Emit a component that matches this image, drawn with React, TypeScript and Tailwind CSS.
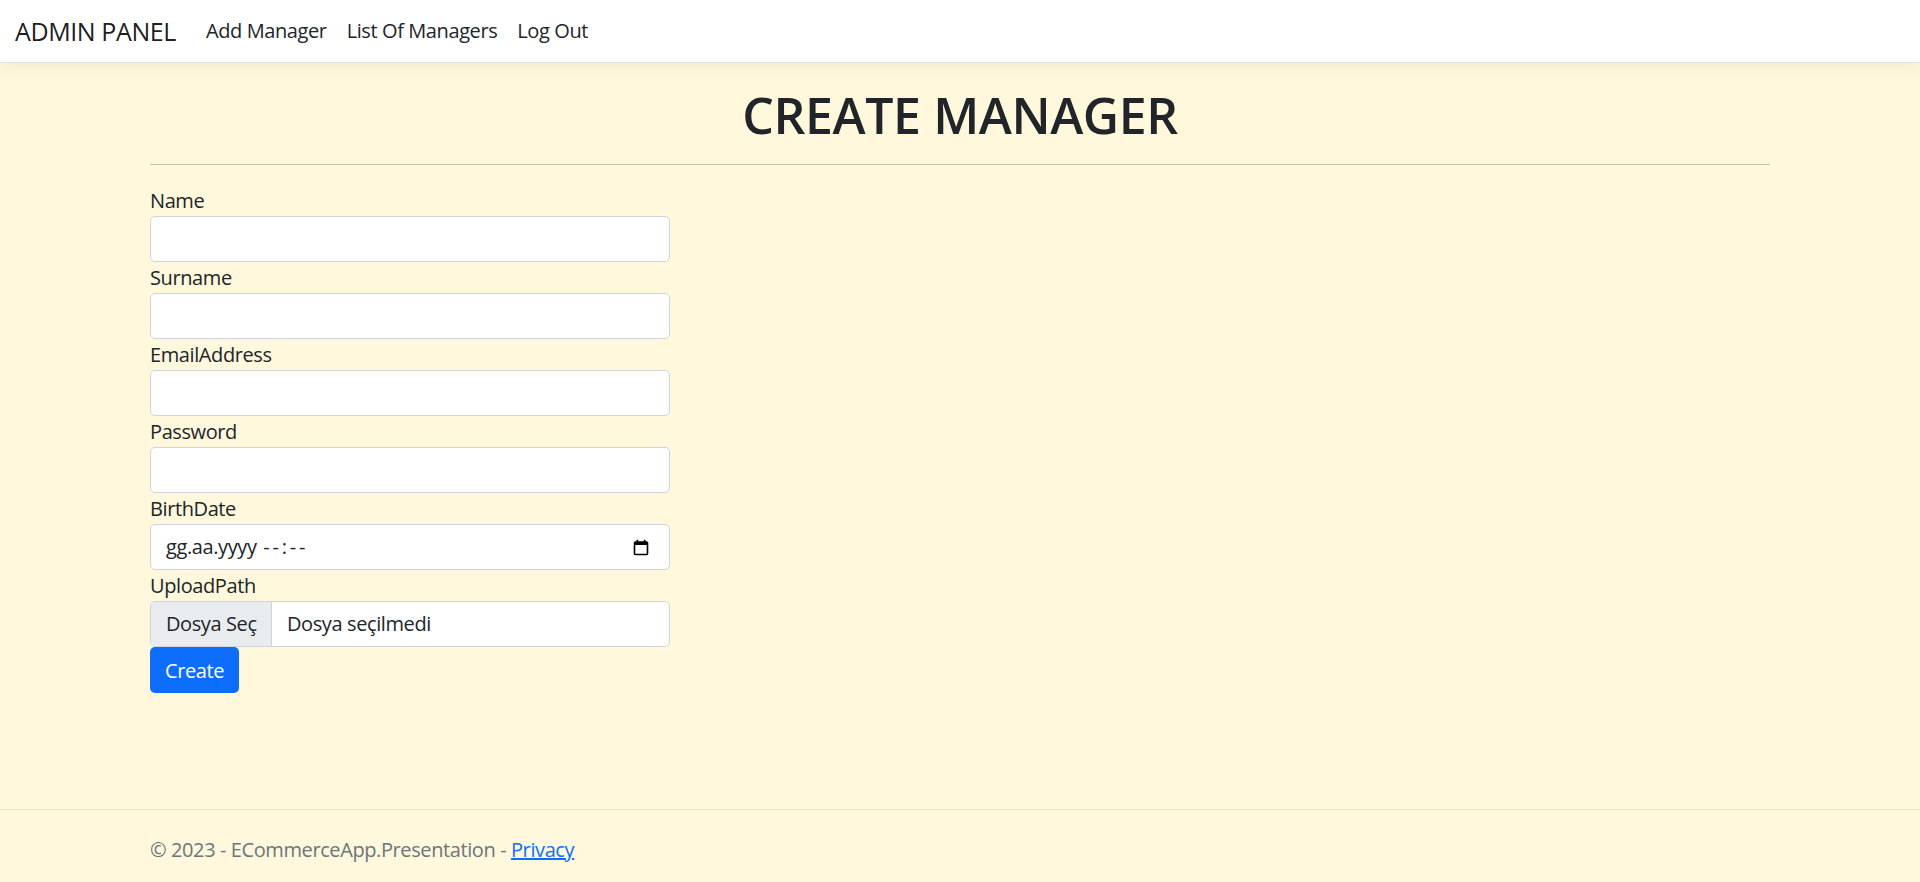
import React from "react";

const fields = ["Name", "Surname", "EmailAddress", "Password"];

function CalendarIcon() {
  return (
    <svg width="16" height="17" viewBox="0 0 16 17" className="shrink-0">
      <rect x="1.5" y="3" width="13" height="12.5" rx="1" fill="none" stroke="#000" strokeWidth="1.6" />
      <rect x="1.5" y="3" width="13" height="3" fill="#000" />
      <rect x="3.5" y="0.8" width="1.7" height="3" fill="#000" />
      <rect x="10.8" y="0.8" width="1.7" height="3" fill="#000" />
    </svg>
  );
}

export default function App() {
  return (
    <div
      className="min-h-screen flex flex-col bg-[#fff8dc] text-[#212529] text-[20px] tracking-[-0.02em]"
      style={{ fontFamily: '"Open Sans", "Noto Sans", sans-serif' }}
    >
      {/* top navbar */}
      <nav className="h-[63px] shrink-0 bg-white border-b border-[#dee2e6] shadow-[0_5px_15px_rgba(0,0,0,0.05)] flex items-center pl-[15px]">
        <span className="text-[25px] leading-[38px] text-black/90 mr-[20px]">ADMIN PANEL</span>
        {["Add Manager", "List Of Managers", "Log Out"].map((l) => (
          <a key={l} href="#" className="px-[10px] leading-[28px] text-[#212529]">
            {l}
          </a>
        ))}
      </nav>

      <main className="w-[1620px] mx-auto">
        <h1 className="mt-[22px] h-[60px] leading-[60px] text-center text-[50px] font-semibold">CREATE MANAGER</h1>
        <hr className="mt-[19px] border-0 border-t border-[#c8c3af]" />

        <form className="mt-[20px] w-[520px]">
          {fields.map((f) => (
            <div key={f}>
              <label className="block leading-[31px]">{f}</label>
              <div className="h-[46px] bg-white border border-[#ced4da] rounded-[5px]" />
            </div>
          ))}

          <div>
            <label className="block leading-[31px]">BirthDate</label>
            <div className="h-[46px] bg-white border border-[#ced4da] rounded-[5px] flex items-center justify-between pl-[15px] pr-[20px]">
              <span className="leading-[30px]">
                gg.aa.yyyy <span className="ml-[2px] tracking-[0.14em]">--:--</span>
              </span>
              <CalendarIcon />
            </div>
          </div>

          <div>
            <label className="block leading-[31px]">UploadPath</label>
            <div className="h-[46px] bg-white border border-[#ced4da] rounded-[5px] flex overflow-hidden">
              <span className="w-[121px] bg-[#e9ecef] border-r border-[#ced4da] pl-[15px] flex items-center">Dosya Seç</span>
              <span className="pl-[15px] flex items-center">Dosya seçilmedi</span>
            </div>
          </div>

          <button type="button" className="h-[46px] w-[89px] bg-[#0d6efd] text-white rounded-[5px] leading-[30px] pt-[2px]">
            Create
          </button>
        </form>
      </main>

      <footer className="mt-auto h-[73px] border-t border-[#dee2e6] text-[#6c757d]">
        <div className="w-[1620px] mx-auto leading-[79px]">
          © 2023 - ECommerceApp.Presentation -{" "}
          <a href="#" className="text-[#0d6efd] underline">
            Privacy
          </a>
        </div>
      </footer>
    </div>
  );
}
